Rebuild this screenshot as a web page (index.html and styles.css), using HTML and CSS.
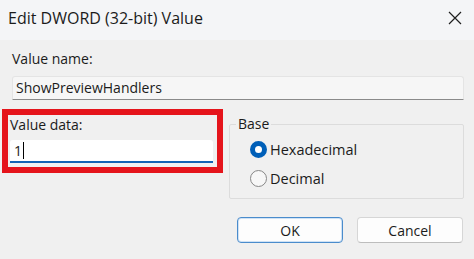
FILE: index.html
```html
<!DOCTYPE html>
<html>
<head>
<meta charset="utf-8">
<link rel="stylesheet" href="styles.css">
</head>
<body>
<div class="dialog">
  <div class="titlebar">
    <span class="title">Edit DWORD (32-bit) Value</span>
    <svg class="close" width="14" height="14" viewBox="0 0 14 14"><path d="M1 1 L13 13 M13 1 L1 13" stroke="#1f1f1f" stroke-width="1.2" fill="none"/></svg>
  </div>
  <div class="content">
    <div class="label name-label">Value name:</div>
    <div class="namefield">ShowPreviewHandlers</div>
    <div class="row">
      <div class="highlight">
        <div class="label">Value data:</div>
        <div class="datafield"><span class="val">1</span><span class="caret"></span></div>
      </div>
      <fieldset class="group">
        <legend>Base</legend>
        <div class="radio"><span class="dot checked"></span>Hexadecimal</div>
        <div class="radio"><span class="dot"></span>Decimal</div>
      </fieldset>
    </div>
    <div class="buttons">
      <div class="btn ok">OK</div>
      <div class="btn">Cancel</div>
    </div>
  </div>
</div>
</body>
</html>
```
FILE: styles.css
```css
html, body {
  margin: 0;
  padding: 0;
}
body {
  width: 474px;
  height: 259px;
  background: #f0f0f0;
  font-family: "Open Sans", "Liberation Sans", sans-serif;
  font-size: 14px;
  color: #1b1b1b;
  overflow: hidden;
}
.dialog {
  width: 474px;
  height: 259px;
  display: flex;
  flex-direction: column;
}
.titlebar {
  height: 40px;
  background: #f4f5f7;
  display: flex;
  align-items: center;
  justify-content: space-between;
  padding: 0 12px 4px 8px;
  box-sizing: border-box;
}
.title {
  font-size: 16px;
  color: #1b1b1b;
}
.content {
  padding: 0 10px 0 2px;
  display: flex;
  flex-direction: column;
}
.label {
  line-height: 20px;
}
.name-label {
  margin: 9px 0 0 10px;
}
.namefield {
  margin: 7px 0 0 10px;
  height: 24px;
  box-sizing: border-box;
  border: 1px solid #e4e4e4;
  border-bottom: 1px solid #8a8a8a;
  background: #f6f6f6;
  border-radius: 3px 3px 0 0;
  padding-left: 3px;
  line-height: 21px;
}
.row {
  display: flex;
  align-items: flex-start;
  margin-top: 9px;
}
.highlight {
  width: 221px;
  height: 64px;
  box-sizing: border-box;
  border: 6px solid #e5141b;
  padding: 0 4px 0 2px;
  display: flex;
  flex-direction: column;
}
.datafield {
  margin-top: 5px;
  height: 23px;
  box-sizing: border-box;
  background: #ffffff;
  border-bottom: 2px solid #1363b4;
  border-radius: 3px 3px 0 0;
  padding-left: 4px;
  display: flex;
  align-items: center;
}
.caret {
  width: 1px;
  height: 17px;
  background: #000;
  margin-left: 1px;
}
.group {
  margin: 5px 0 0 6px;
  padding: 0;
  border: 1px solid #dcdcdc;
  border-radius: 2px;
  flex: 1;
  height: 85px;
  box-sizing: border-box;
  min-width: 0;
}
.group legend {
  padding: 0 2px;
  margin-left: 6px;
  line-height: 20px;
}
.radio {
  display: flex;
  align-items: center;
  height: 29px;
  padding-left: 20px;
  font-size: 14.5px;
}
.radio:first-of-type {
  margin-top: 1px;
}
.dot {
  width: 17px;
  height: 17px;
  box-sizing: border-box;
  border-radius: 50%;
  border: 1px solid #878787;
  background: #f7f7f7;
  margin-right: 3px;
}
.dot.checked {
  border: 5px solid #005fb8;
  background: #ffffff;
}
.buttons {
  display: flex;
  justify-content: flex-end;
  gap: 14px;
  margin-top: 18px;
  padding-right: 1px;
}
.btn {
  width: 106px;
  height: 26px;
  box-sizing: border-box;
  background: #fdfdfd;
  border: 1px solid #d6d6d6;
  border-bottom-color: #bdbdbd;
  border-radius: 4px;
  display: flex;
  align-items: center;
  justify-content: center;
}
.btn.ok {
  border: 1px solid #4a8ccc;
  box-shadow: inset 0 0 0 1px #cfe2f5;
}
```
